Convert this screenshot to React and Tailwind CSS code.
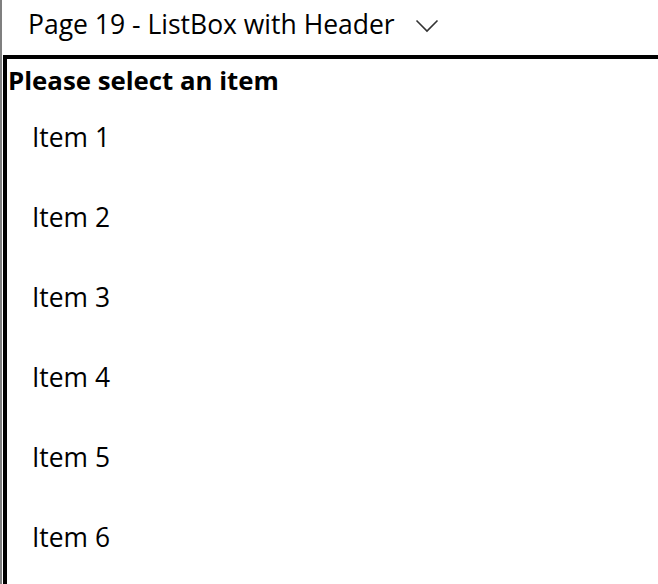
export default function App() {
  const items = ["Item 1", "Item 2", "Item 3", "Item 4", "Item 5", "Item 6"];

  return (
    <div
      className="w-[658px] h-[584px] overflow-hidden bg-white border-l-2 border-[#7f7f7f] pl-px text-black"
      style={{ fontFamily: '"Open Sans", "Noto Sans", sans-serif' }}
    >
      {/* page picker */}
      <div className="h-[55px] flex items-center pl-[25px] pb-[6px]">
        <span className="text-[26.5px] leading-none">Page 19 - ListBox with Header</span>
        <svg width="24" height="14" viewBox="0 0 24 14" className="ml-[20px] mt-[2px]">
          <polyline
            points="1.5,1.5 12,12 22.5,1.5"
            fill="none"
            stroke="#333"
            strokeWidth="1.6"
          />
        </svg>
      </div>

      {/* list box */}
      <div className="border-t-4 border-l-4 border-black h-[600px]">
        <div className="h-[38px] flex items-center pl-px pt-[6px]">
          <span className="text-[25.8px] font-bold leading-none">Please select an item</span>
        </div>
        {items.map((item) => (
          <div key={item} className="h-[80px] flex items-center pl-[25px]">
            <span className="text-[26.4px] leading-none">{item}</span>
          </div>
        ))}
      </div>
    </div>
  );
}
